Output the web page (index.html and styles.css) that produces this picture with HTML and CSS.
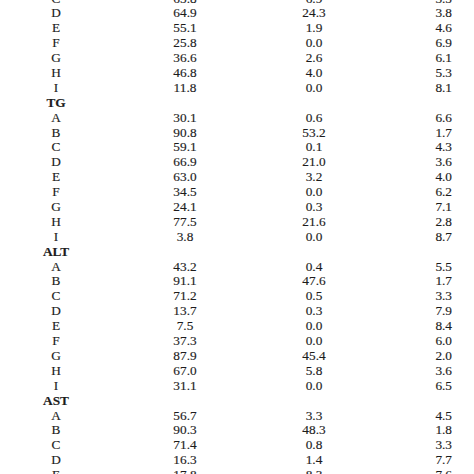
FILE: index.html
```html
<!DOCTYPE html>
<html>
<head>
<meta charset="utf-8">
<link rel="stylesheet" href="styles.css">
</head>
<body>
<div class="table">
  <div class="row"><span class="lab">C</span><span class="c2">65.8</span><span class="c3">6.9</span><span class="c4">3.5</span></div>
  <div class="row"><span class="lab">D</span><span class="c2">64.9</span><span class="c3">24.3</span><span class="c4">3.8</span></div>
  <div class="row"><span class="lab">E</span><span class="c2">55.1</span><span class="c3">1.9</span><span class="c4">4.6</span></div>
  <div class="row"><span class="lab">F</span><span class="c2">25.8</span><span class="c3">0.0</span><span class="c4">6.9</span></div>
  <div class="row"><span class="lab">G</span><span class="c2">36.6</span><span class="c3">2.6</span><span class="c4">6.1</span></div>
  <div class="row"><span class="lab">H</span><span class="c2">46.8</span><span class="c3">4.0</span><span class="c4">5.3</span></div>
  <div class="row"><span class="lab">I</span><span class="c2">11.8</span><span class="c3">0.0</span><span class="c4">8.1</span></div>
  <div class="row"><span class="lab head">TG</span></div>
  <div class="row"><span class="lab">A</span><span class="c2">30.1</span><span class="c3">0.6</span><span class="c4">6.6</span></div>
  <div class="row"><span class="lab">B</span><span class="c2">90.8</span><span class="c3">53.2</span><span class="c4">1.7</span></div>
  <div class="row"><span class="lab">C</span><span class="c2">59.1</span><span class="c3">0.1</span><span class="c4">4.3</span></div>
  <div class="row"><span class="lab">D</span><span class="c2">66.9</span><span class="c3">21.0</span><span class="c4">3.6</span></div>
  <div class="row"><span class="lab">E</span><span class="c2">63.0</span><span class="c3">3.2</span><span class="c4">4.0</span></div>
  <div class="row"><span class="lab">F</span><span class="c2">34.5</span><span class="c3">0.0</span><span class="c4">6.2</span></div>
  <div class="row"><span class="lab">G</span><span class="c2">24.1</span><span class="c3">0.3</span><span class="c4">7.1</span></div>
  <div class="row"><span class="lab">H</span><span class="c2">77.5</span><span class="c3">21.6</span><span class="c4">2.8</span></div>
  <div class="row"><span class="lab">I</span><span class="c2">3.8</span><span class="c3">0.0</span><span class="c4">8.7</span></div>
  <div class="row"><span class="lab head">ALT</span></div>
  <div class="row"><span class="lab">A</span><span class="c2">43.2</span><span class="c3">0.4</span><span class="c4">5.5</span></div>
  <div class="row"><span class="lab">B</span><span class="c2">91.1</span><span class="c3">47.6</span><span class="c4">1.7</span></div>
  <div class="row"><span class="lab">C</span><span class="c2">71.2</span><span class="c3">0.5</span><span class="c4">3.3</span></div>
  <div class="row"><span class="lab">D</span><span class="c2">13.7</span><span class="c3">0.3</span><span class="c4">7.9</span></div>
  <div class="row"><span class="lab">E</span><span class="c2">7.5</span><span class="c3">0.0</span><span class="c4">8.4</span></div>
  <div class="row"><span class="lab">F</span><span class="c2">37.3</span><span class="c3">0.0</span><span class="c4">6.0</span></div>
  <div class="row"><span class="lab">G</span><span class="c2">87.9</span><span class="c3">45.4</span><span class="c4">2.0</span></div>
  <div class="row"><span class="lab">H</span><span class="c2">67.0</span><span class="c3">5.8</span><span class="c4">3.6</span></div>
  <div class="row"><span class="lab">I</span><span class="c2">31.1</span><span class="c3">0.0</span><span class="c4">6.5</span></div>
  <div class="row"><span class="lab head">AST</span></div>
  <div class="row"><span class="lab">A</span><span class="c2">56.7</span><span class="c3">3.3</span><span class="c4">4.5</span></div>
  <div class="row"><span class="lab">B</span><span class="c2">90.3</span><span class="c3">48.3</span><span class="c4">1.8</span></div>
  <div class="row"><span class="lab">C</span><span class="c2">71.4</span><span class="c3">0.8</span><span class="c4">3.3</span></div>
  <div class="row"><span class="lab">D</span><span class="c2">16.3</span><span class="c3">1.4</span><span class="c4">7.7</span></div>
  <div class="row"><span class="lab">E</span><span class="c2">17.8</span><span class="c3">8.3</span><span class="c4">7.6</span></div>
</div>
</body>
</html>
```
FILE: styles.css
```css
html, body {
  margin: 0;
  padding: 0;
  background: #ffffff;
  overflow: hidden;
}
body {
  width: 474px;
  height: 474px;
}
.table {
  margin-top: -8.45px;
  font-family: "Liberation Serif", "Times New Roman", serif;
  font-size: 13.3px;
  color: #1c1c1c;
  -webkit-text-stroke: 0.15px #1c1c1c;
}
.row {
  display: grid;
  grid-template-columns: 112px 146px 112px 104px;
  height: 14.9px;
  line-height: 14.9px;
  white-space: nowrap;
}
.row span {
  text-align: center;
}
.lab {
  grid-column: 1;
}
.head {
  font-weight: bold;
}
.c2 { grid-column: 2; }
.c3 { grid-column: 3; }
.c4 {
  grid-column: 4;
  text-align: right !important;
  padding-right: 22px;
}
```
